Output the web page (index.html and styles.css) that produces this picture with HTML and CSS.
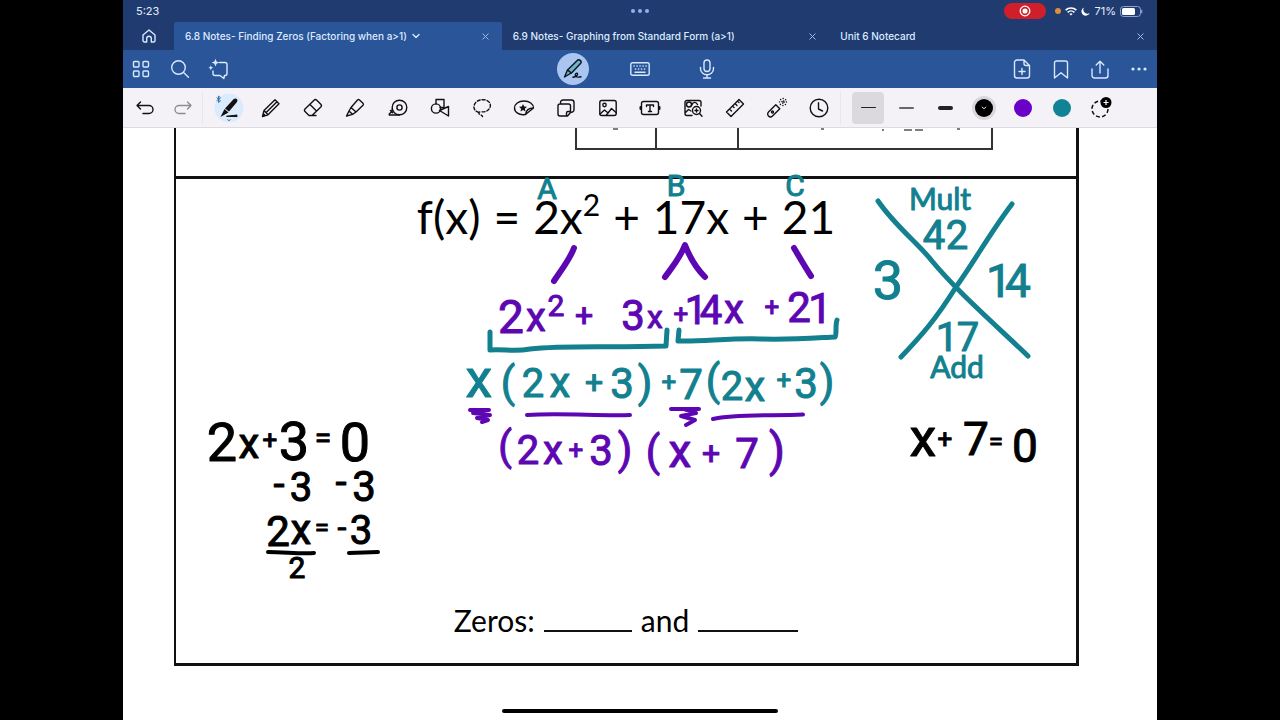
FILE: index.html
```html
<!DOCTYPE html>
<html lang="en">
<head>
<meta charset="utf-8">
<title>6.8 Notes- Finding Zeros</title>
<link rel="stylesheet" href="styles.css">
</head>
<body>
<div class="app">
  <header class="chrome">
    <div class="status">
      <span class="time">5:23</span>
      <span class="dots"><i></i><i></i><i></i></span>
      <div class="status-right">
        <span class="rec"><svg width="12" height="12" viewBox="0 0 12 12" fill="none" stroke="#fff" stroke-width="1.3"><circle cx="6" cy="6" r="4.8"/><circle cx="6" cy="6" r="1.9" fill="#fff"/></svg></span>
        <span class="mic-dot"></span>
        <svg width="12" height="9" viewBox="0 0 12 9" fill="none" stroke="#fff" stroke-width="1.6"><path d="M.6 3.2a7.8 7.8 0 0 1 10.8 0M2.6 5.3a5 5 0 0 1 6.8 0"/><path d="M6 8.6 4.4 7a2.3 2.3 0 0 1 3.2 0z" fill="#fff" stroke="none"/></svg>
        <svg width="9" height="9" viewBox="0 0 9 9"><path d="M3 .4A4.3 4.3 0 1 0 8.7 6 4.1 4.1 0 0 1 3 .4z" fill="#fff"/></svg>
        <span>71%</span>
        <svg width="23" height="11" viewBox="0 0 23 11"><rect x=".5" y=".5" width="20" height="10" rx="3" fill="none" stroke="#8ba3cc"/><rect x="2" y="2" width="13" height="7" rx="1.5" fill="#fff"/><path d="M21.7 3.8v3.4" stroke="#8ba3cc" stroke-width="1.2"/></svg>
      </div>
    </div>
    <nav class="tabs">
      <button class="home" aria-label="Home"><svg width="14" height="14" viewBox="0 0 14 14" class="line"><path d="M1 6 7 1l6 5v5.500a1.500 1.500 0 0 1-1.500 1.500H9.300V9.600a2.300 2.300 0 0 0-4.600 0V13H2.500A1.500 1.500 0 0 1 1 11.500z"/></svg></button>
      <div class="tab active"><a href="#">6.8 Notes- Finding Zeros (Factoring when a&gt;1)</a><svg class="chev line" width="8" height="6" viewBox="0 0 8 6"><path d="m1 1.500 3 3 3-3"/></svg><button class="close" aria-label="Close tab"><svg width="7" height="7" viewBox="0 0 7 7"><path d="m.5.5 6 6m0-6-6 6"/></svg></button></div>
      <div class="tab"><a href="#">6.9 Notes- Graphing from Standard Form (a&gt;1)</a><button class="close" aria-label="Close tab"><svg width="7" height="7" viewBox="0 0 7 7"><path d="m.5.5 6 6m0-6-6 6"/></svg></button></div>
      <div class="tab"><a href="#">Unit 6 Notecard</a><button class="close" aria-label="Close tab"><svg width="7" height="7" viewBox="0 0 7 7"><path d="m.5.5 6 6m0-6-6 6"/></svg></button></div>
    </nav>
    <div class="navbar">
      <div class="nav-group">
        <button aria-label="Pages"><svg width="18" height="18" viewBox="0 0 18 18" class="line"><rect x="1.500" y="1.500" width="5.500" height="5.500" rx="1"/><rect x="11" y="1.500" width="5.500" height="5.500" rx="1"/><rect x="1.500" y="11" width="5.500" height="5.500" rx="1"/><rect x="11" y="11" width="5.500" height="5.500" rx="1"/></svg></button>
        <button aria-label="Search"><svg width="20" height="20" viewBox="0 0 20 20" class="line"><circle cx="8.500" cy="8.500" r="6.800"/><path d="m13.500 13.500 5 4.800"/></svg></button>
        <button aria-label="Assistant"><svg width="22" height="22" viewBox="0 0 22 22" class="line"><path d="M11.500 4.500H17a2 2 0 0 1 2 2v9a2 2 0 0 1-2 2h-.5L15.800 20.500 12 17.500H7a2 2 0 0 1-2-2V13"/><path d="M7.500.7l1.100 2.800 2.800 1.100-2.800 1.100-1.100 2.800-1.100-2.800-2.800-1.100 2.800-1.100zM2.800 7.300l.7 1.700 1.700.7-1.700.7-.7 1.800-.7-1.800-1.700-.7 1.700-.7z" fill="#d6e9ff" stroke="none"/></svg></button>
      </div>
      <div class="nav-mid">
        <button class="pen-on" aria-label="Draw mode"><svg width="20" height="20" viewBox="0 0 20 20" fill="none" stroke="#0b1320" stroke-width="1.400" stroke-linecap="round" stroke-linejoin="round"><path d="M4.500 11 14 1.700a2.200 2.200 0 0 1 3.500 2.900L9 13.500 1.500 18z" fill="#6fb4c6"/><path d="m4.500 11 3.800 2.900M10 18.300c3-.5 5-2 4.500-3.500s-3 0-2 1.800 3.500 1.700 5.500 1.200"/></svg></button>
        <button aria-label="Keyboard"><svg width="20" height="14" viewBox="0 0 20 14" class="line"><rect x=".8" y=".8" width="18.400" height="12.400" rx="1.800"/><path d="M5 10.200h10"/><path d="M4 4h.1m2.900 0h.1m2.900 0h.1m2.900 0h.1m2.900 0h.1M5.500 7h.1m2.900 0h.1m2.900 0h.1m2.900 0h.1" stroke-width="1.600"/></svg></button>
        <button aria-label="Record"><svg width="16" height="20" viewBox="0 0 16 20" class="line"><rect x="5" y="1" width="6" height="11.500" rx="3"/><path d="M1.500 8.500v1.200a6.500 6 0 0 0 13 0V8.500M8 16v3M4.500 19h7"/></svg></button>
      </div>
      <div class="nav-group end">
        <button aria-label="Add page"><svg width="18" height="20" viewBox="0 0 18 20" class="line"><path d="M11 1H4a2.500 2.500 0 0 0-2.500 2.500v13A2.500 2.500 0 0 0 4 19h10a2.500 2.500 0 0 0 2.500-2.500V6.500zM11 1v3.500a2 2 0 0 0 2 2h3.500M9 9.500v6M6 12.500h6"/></svg></button>
        <button aria-label="Bookmark"><svg width="16" height="19" viewBox="0 0 16 19" class="line"><path d="M1.500 3a2 2 0 0 1 2-2h9a2 2 0 0 1 2 2v15L8 12.800 1.500 18z"/></svg></button>
        <button aria-label="Share"><svg width="18" height="19" viewBox="0 0 18 19" class="line"><path d="M1 9v6.500A2.500 2.500 0 0 0 3.500 18h11a2.500 2.500 0 0 0 2.500-2.500V9M9 13V1.500M5.200 5 9 1.200 12.800 5"/></svg></button>
        <button aria-label="More"><svg width="16" height="4" viewBox="0 0 16 4" fill="#d6e9ff"><circle cx="2" cy="2" r="1.600"/><circle cx="8" cy="2" r="1.600"/><circle cx="14" cy="2" r="1.600"/></svg></button>
      </div>
    </div>
  </header>

  <div class="toolbar">
    <div class="history">
      <button aria-label="Undo"><svg width="18" height="14" viewBox="0 0 18 14" class="ico"><path d="M4.500 1 1 4.500 4.500 8M1 4.500h12a4 4 0 0 1 0 8H7"/></svg></button>
      <button aria-label="Redo"><svg width="18" height="14" viewBox="0 0 18 14" class="ico faded"><path d="M13.500 1 17 4.500 13.500 8M17 4.500H5a4 4 0 0 0 0 8h6"/></svg></button>
    </div>
    <div class="tools">
      <button aria-label="Pen"><svg width="36" height="30" viewBox="0 0 36 30"><circle cx="18" cy="15" r="14.500" fill="#dcebfc"/><path d="M7.500 3v6.500M5.500 4.500l4 3.300-2 1.700M9.500 4.700l-4 3.100M7.500 3l2 1.700" stroke="#2f78b5" fill="none"/><path d="M14 15.500 22.500 6.300c2.200-2 5 .2 3.500 2.600L18 18.500z" fill="#111"/><path d="M13.500 16 9.500 24l8-4.500z" fill="#111"/><path d="M15.500 23.300 26 22v1.600z" stroke="#111" fill="#111"/><path d="m16.500 26.500 1.500 1.200 1.500-1.200" stroke="#4c6880" fill="none"/></svg></button>
      <button aria-label="Pencil"><svg width="20" height="20" viewBox="0 0 20 20" class="ico"><path d="M3 12.500 14 1.800l4 4L7 16.800 1.500 18.500zM3 12.500l4 4.300M5.200 14.600 16 3.800M1.500 18.500l2-2"/></svg></button>
      <button aria-label="Eraser"><svg width="20" height="20" viewBox="0 0 20 20" class="ico"><path d="M2 11 11 2.200a2 2 0 0 1 2.800 0l4 4a2 2 0 0 1 0 2.800L9 17.500H6L2 13.600a2 2 0 0 1 0-2.600zM7 6.500l6.500 6.500M7 17.500h6"/></svg></button>
      <button aria-label="Highlighter"><svg width="20" height="20" viewBox="0 0 20 20" class="ico"><path d="M6 9.500 12.500 2a1.500 1.500 0 0 1 2 0L18 5.200a1.500 1.500 0 0 1 0 2L11 14zM6 9.500 4 13l3.500 3.300L11 14M4 13l-2.500 5 6-1.700"/></svg></button>
      <button aria-label="Tape"><svg width="20" height="20" viewBox="0 0 20 20" class="ico"><circle cx="11.500" cy="9.500" r="7.300"/><circle cx="11.500" cy="9.500" r="2.600"/><path d="M4.200 11v2L1.300 16v1h10.200M2.500 12.500l2 2.300"/></svg></button>
      <button aria-label="Shapes"><svg width="20" height="20" viewBox="0 0 20 20" class="ico"><path d="M6 6V1.500h8v8h-4"/><circle cx="6" cy="10.500" r="4.600"/><path d="m9.500 12.500 9-4v9.500z"/></svg></button>
      <button aria-label="Lasso"><svg width="20" height="20" viewBox="0 0 20 20" class="ico"><path stroke-dasharray="3 2" d="M7 14.500C3.500 13.500 1.500 11 2 8c.6-4 4.600-6.500 9.500-6.300 4.500.2 7.300 3 6.800 6.300-.5 4-4.500 6.500-9 5.800-2-.3-3.200 1-2 2.200s2.700 1 3.200 2.500"/></svg></button>
      <button aria-label="Elements"><svg width="22" height="20" viewBox="0 0 22 20" class="ico"><path d="M12 16.500C6 17.500 1.500 14 1.500 10S5.500 3 11 3s9.500 3 9.500 7l-8 6.500c.5-4 3-6.500 8-6.500"/><path d="m10 6 1.200 2.600 2.800.2-2.100 1.900.6 2.800-2.500-1.500-2.500 1.500.6-2.800L6 8.800l2.800-.2z" fill="#111" stroke="none"/></svg></button>
      <button aria-label="Stickers"><svg width="20" height="20" viewBox="0 0 20 20" class="ico"><path d="M11.500 18H4a2 2 0 0 1-2-2V8a2 2 0 0 1 2-2h8.500a2 2 0 0 1 2 2v6.500zM14.500 13.500H12a1.500 1.500 0 0 0-1.500 1.500v3M4.500 6V4.500A2.500 2.500 0 0 1 7 2h8.500A2.500 2.500 0 0 1 18 4.500V12a2.500 2.500 0 0 1-3.500 2"/></svg></button>
      <button aria-label="Image"><svg width="20" height="20" viewBox="0 0 20 20" class="ico"><rect x="1.800" y="2.500" width="16.400" height="15" rx="2"/><circle cx="6.500" cy="7" r="1.700"/><path d="m2 16 4.500-4 3 2.500M8.500 17l5-6.500 4.500 4"/></svg></button>
      <button aria-label="Text"><svg width="22" height="20" viewBox="0 0 22 20" class="ico"><rect x="2.500" y="3.500" width="17" height="13" rx="2"/><path d="M7.500 8.500V7h7v1.500M11 7v6.500M9.500 13.500h3"/><path d="M1.500 9v2M20.500 9v2" stroke-width="2"/></svg></button>
      <button aria-label="Photo search"><svg width="20" height="20" viewBox="0 0 20 20" class="ico"><path d="M9 17.500H4a2 2 0 0 1-2-2v-11a2 2 0 0 1 2-2h12a2 2 0 0 1 2 2V8M2 15l3.500-3.500L8 13"/><circle cx="6" cy="6.500" r="2.500"/><path d="M8.500 7.500c1.500-4 4.500-4 6-1"/><circle cx="13.500" cy="12.500" r="4"/><path d="m16.500 15.500 2.500 2.700M13.500 11v3M12 12.500h3"/></svg></button>
      <button aria-label="Ruler"><svg width="20" height="20" viewBox="0 0 20 20" class="ico"><path d="M1.500 14 14 1.500 18.500 6 6 18.500zM4.500 11l2 2M7.500 8l1.500 1.500M10 5.500l2 2M12.500 3 14 4.500"/></svg></button>
      <button aria-label="Laser pointer"><svg width="22" height="22" viewBox="0 0 22 22" class="ico"><path d="M2.500 15 9.800 7.800l4 4L6.500 19a2.800 2.800 0 0 1-4-4z"/><circle cx="6.500" cy="15" r="1"/><circle cx="17" cy="5" r="3.500" stroke-dasharray=".1 2.600"/><circle cx="17" cy="5" r="1.200" stroke-dasharray=".1 1.800"/><path d="M17 5h.1"/></svg></button>
      <button aria-label="Timer"><svg width="20" height="20" viewBox="0 0 20 20" class="ico"><circle cx="10" cy="10" r="8.800"/><path d="M9.500 4.800V11l4 2"/></svg></button>
    </div>
    <div class="swatches">
      <button class="width on" aria-label="Thin"><i class="thin"></i></button>
      <button class="width" aria-label="Medium"><i class="medium"></i></button>
      <button class="width" aria-label="Thick"><i class="thick"></i></button>
      <button aria-label="Black"><span class="dot black"><svg width="6" height="4" viewBox="0 0 6 4" fill="none" stroke="#fff"><path d="m1 .8 2 2 2-2"/></svg></span></button>
      <button aria-label="Purple"><span class="dot purple"></span></button>
      <button aria-label="Teal"><span class="dot teal"></span></button>
      <button aria-label="Add color"><svg width="22" height="22" viewBox="0 0 22 22" fill="none"><circle cx="10" cy="12" r="8" stroke="#111" stroke-width="1.500" stroke-dasharray="4 2.300"/><circle cx="16" cy="5.500" r="5.500" fill="#000"/><path d="M16 3v5M13.500 5.500h5" stroke="#fff" stroke-width="1.200"/></svg></button>
    </div>
  </div>

  <main class="page">
    <section class="sheet">
      <div class="previous"><div class="answer"><span></span><span></span><span></span></div></div>
      <div class="problem">
        <div class="formula"><span>f(x)</span><span>=</span><span>2x<sup>2</sup></span><span>+</span><span>17x</span><span>+</span><span>21</span></div>
        <div class="zeros"><span>Zeros:</span><i class="blank"></i><span>and</span><i class="blank wide"></i></div>
      </div>
    </section>
    <svg class="ink" viewBox="123 127 1034 593" preserveAspectRatio="xMidYMin meet">
      <g stroke="#555" stroke-width="1.500"><path d="M613 128h5M821 128h3M883 128v2M904 129h8M915 129h8M957 128h3"/></g>
      <g class="pen-teal">
        <text class="s30" x="547" y="198">A</text><text class="s30" x="676" y="195">B</text><text class="s30" x="795" y="195">C</text>
        <text class="s30 word" x="940" y="209">Mult</text>
        <text class="s40" x="934" y="248">4</text><text class="s40" x="957" y="248">2</text>
        <text class="s56" x="888" y="298">3</text>
        <text class="s48" x="999" y="296">1</text><text class="s48" x="1018" y="296">4</text>
        <text class="s40" x="947" y="350">1</text><text class="s40" x="968" y="350">7</text>
        <text class="s30 word" x="957" y="377">Add</text>
        <text class="s56" x="479" y="396">x</text><text class="s44" x="508" y="396">(</text><text class="s40" x="533" y="396">2</text><text class="s44" x="560" y="396">x</text><text class="s36" x="594" y="392">+</text><text class="s44" x="622" y="397">3</text><text class="s44" x="645" y="396">)</text>
        <text class="s26" x="669" y="390">+</text><text class="s44" x="691" y="398">7</text><text class="s44" x="713" y="394">(</text><text class="s40" x="732" y="399">2</text><text class="s44" x="755" y="400">x</text><text class="s26" x="784" y="388">+</text><text class="s44" x="806" y="397">3</text><text class="s44" x="827" y="395">)</text>
        <g class="stroke w5"><path d="M878 200C896 226 918 242 932 260C956 289 988 317 1028 355"/><path d="M1012 203C990 232 976 258 956 286C936 318 922 334 901 356"/></g>
        <g class="stroke w5"><path d="M490 331V349C505 348 515 351 530 348C565 344 610 347 666 345L667 329"/><path d="M679 329L678 340C700 341 730 337 760 338S815 337 835 336C837 333 835 325 837 319"/></g>
      </g>
      <g class="pen-purple">
        <g class="stroke w6"><path d="M574 247C570 258 562 268 554 280"/><path d="M665 276C673 265 680 257 685 244C690 257 697 268 705 276"/><path d="M794 247C800 257 805 266 811 275"/></g>
        <text class="s48" x="511" y="332">2</text><text class="s40" x="536" y="330">x</text><text class="s30" x="556" y="315">2</text><text class="s36" x="584" y="325">+</text>
        <text class="s44" x="633" y="329">3</text><text class="s36" x="655" y="327">x</text><text class="s26" x="681" y="322">+</text><text class="s40" x="696" y="323">1</text><text class="s40" x="711" y="323">4</text><text class="s40" x="734" y="322">x</text><text class="s26" x="772" y="315">+</text><text class="s44" x="799" y="321">2</text><text class="s44" x="820" y="322">1</text>
        <g class="stroke w4"><path d="M527 414C560 412 600 415 630 414M713 418C735 413 775 415 803 413.500"/><path d="M470 409H489L473 412 490 414 477 417 488 419 482 421"/><path d="M671 408H699M684 408L696 412 681 415 695 419 686 424"/></g>
        <text class="s40" x="505" y="459">(</text><text class="s40" x="528" y="463">2</text><text class="s40" x="553" y="463">x</text><text class="s26" x="576" y="458">+</text><text class="s44" x="601" y="464">3</text><text class="s44" x="625" y="463">)</text>
        <text class="s44" x="653" y="465">(</text><text class="s48" x="680" y="466">x</text><text class="s36" x="711" y="463">+</text><text class="s44" x="747" y="467">7</text><text class="s48" x="777" y="465">)</text>
      </g>
      <g class="pen-black">
        <text class="s56" x="222" y="460">2</text><text class="s44" x="249" y="457">x</text><text class="s26" x="270" y="448">+</text><text class="s56" x="294" y="459">3</text><text class="s30" x="323" y="447">=</text><text class="s56" x="355" y="460">0</text>
        <text class="s40" x="279" y="497">-</text><text class="s40" x="301" y="500">3</text><text class="s40" x="341" y="495">-</text><text class="s44" x="364" y="500">3</text>
        <text class="s44" x="278" y="545">2</text><text class="s44" x="301" y="543">x</text><text class="s26" x="322" y="535">=</text><text class="s36" x="342" y="537">-</text><text class="s40" x="361" y="543">3</text>
        <text class="s30" x="297" y="577">2</text>
        <g class="stroke w4"><path d="M268 551C285 551 300 553 314 552M349 552L378 551"/></g>
        <text class="s56" x="923" y="455">x</text><text class="s26" x="945" y="447">+</text><text class="s48" x="976" y="454">7</text><text class="s26" x="996" y="449">=</text><text class="s48" x="1025" y="461">0</text>
      </g>
    </svg>
    <div class="home-indicator"></div>
  </main>
</div>
</body>
</html>
```
FILE: styles.css
```css
* { box-sizing: border-box; }
html, body { height: 100%; }
body { margin: 0; background: #000; font-family: Inter, "Liberation Sans", sans-serif; }
button { background: none; border: 0; padding: 0; margin: 0; font: inherit; color: inherit; display: flex; align-items: center; justify-content: center; }
svg { display: block; flex: none; }
a { color: inherit; text-decoration: none; }

.app { min-height: 100%; margin: 0 123px; display: flex; flex-direction: column; background: #fff; }
.chrome { background: #1f3b70; color: #dcebff; }
.line { fill: none; stroke: #d6e9ff; stroke-width: 1.4; stroke-linecap: round; stroke-linejoin: round; }

.status { height: 22px; display: grid; grid-template-columns: 1fr auto 1fr; align-items: center; padding: 0 14px 0 13px; font-size: 11px; color: #e6eefb; }
.dots { display: flex; gap: 3px; }
.dots i { width: 4px; height: 4px; border-radius: 50%; background: #8fb2ea; }
.status-right { display: flex; align-items: center; justify-content: flex-end; gap: 4px; }
.rec { width: 42px; height: 16px; border-radius: 8px; background: #d01f2a; display: flex; align-items: center; justify-content: center; margin-right: 5px; }
.mic-dot { width: 6px; height: 6px; border-radius: 50%; background: #dd8f3c; }

.tabs { display: grid; grid-template-columns: 51px 1fr 1fr 1fr; height: 28px; }
.tab { display: flex; align-items: center; padding: 0 13px 0 11px; font-size: 10px; font-weight: 500; white-space: nowrap; }
.tab.active { background: #2a5598; border-radius: 2px 2px 0 0; }
.chev { margin-left: 5px; }
.close { margin-left: auto; }
.close svg { fill: none; stroke: #9db9e4; stroke-width: 1; }

.navbar { height: 38px; background: #2a5598; display: grid; grid-template-columns: 1fr auto 1fr; align-items: center; }
.nav-group { display: flex; gap: 3px; }
.nav-group button { width: 36px; }
.end { justify-content: flex-end; }
.nav-mid { display: flex; gap: 35px; }
.nav-mid button { width: 32px; height: 32px; }
.pen-on { border-radius: 50%; background: #a9c5f0; }

.toolbar { height: 40px; background: #f4f2f6; border-bottom: 1px solid #dddbe0; display: flex; align-items: center; padding: 0 36px 0 3px; }
.ico { fill: none; stroke: #111; stroke-width: 1.4; stroke-linecap: round; stroke-linejoin: round; }
.faded { stroke: #8d8c91; }
.history { display: flex; border-right: 1px solid #e9e7ec; }
.history button { width: 38px; height: 32px; }
.tools { flex: 1; display: flex; justify-content: space-between; padding: 0 1px 0 6px; border-right: 1px solid #e9e7ec; margin-right: 7px; }
.tools button { width: 40px; height: 32px; }
.swatches { display: flex; }
.swatches button { width: 38px; height: 32px; margin-right: 1px; }
.swatches .on { background: #dbd9de; border-radius: 4px; width: 32px; margin: 0 3px 0 4px; }
.width i { width: 15px; border-radius: 2px; background: #222; }
.width .thin { height: 1px; }
.width .medium { height: 2px; background: #666; }
.width .thick { height: 4px; }
.dot { width: 18px; height: 18px; border-radius: 50%; display: flex; align-items: center; justify-content: center; }
.black { background: #000; box-shadow: 0 0 0 3px #d9d7dc; }
.purple { background: #6a00c8; }
.teal { background: #108494; }

.page { flex: 1; position: relative; display: flex; flex-direction: column; padding: 0 78px 54px 51px; overflow: hidden; font-family: Lato, "Liberation Sans", sans-serif; color: #000; }
.sheet { flex: 1; display: flex; flex-direction: column; border: solid #111; border-width: 0 3px 3px 2px; }
.previous { height: 51px; border-bottom: 3px solid #111; padding: 0 83px 0 399px; }
.answer { height: 22px; display: grid; grid-template-columns: 78px 82px 1fr; border: 2px solid #333; border-top: 0; }
.answer span + span { border-left: 2px solid #333; }
.problem { flex: 1; display: flex; flex-direction: column; justify-content: space-between; align-items: center; padding: 8px 0 26px; }
.formula { display: flex; gap: 13px; font-size: 46px; line-height: 60px; }
.formula sup { font-size: 30px; line-height: 0; vertical-align: 18px; }
.zeros { display: flex; align-items: baseline; gap: 9px; font-size: 30px; line-height: 34px; }
.blank { width: 88px; border-bottom: 2px solid #111; }
.wide { width: 100px; }

.ink { position: absolute; top: 0; left: 0; width: 100%; height: auto; }
.ink text { font-family: Roboto, "Liberation Sans", sans-serif; text-anchor: middle; stroke-width: 1px; stroke-linejoin: round; stroke-linecap: round; }
.ink .word { font-family: Lato, sans-serif; }
.stroke { fill: none; stroke-linecap: round; stroke-linejoin: round; }
.w4 { stroke-width: 4px; }
.w5 { stroke-width: 5px; }
.w6 { stroke-width: 6px; }
.pen-teal { stroke: #12808f; }
.pen-teal text { fill: #12808f; }
.pen-purple { stroke: #5d07b3; }
.pen-purple text { fill: #5d07b3; }
.pen-black { stroke: #000; }
.s26 { font-size: 26px; }
.s30 { font-size: 30px; }
.s36 { font-size: 32px; }
.s40 { font-size: 40px; }
.s44 { font-size: 42px; }
.s48 { font-size: 46px; }
.s56 { font-size: 54px; }
.home-indicator { position: absolute; bottom: 7px; left: 50%; width: 276px; height: 4px; margin-left: -138px; border-radius: 2px; background: #000; }
```
